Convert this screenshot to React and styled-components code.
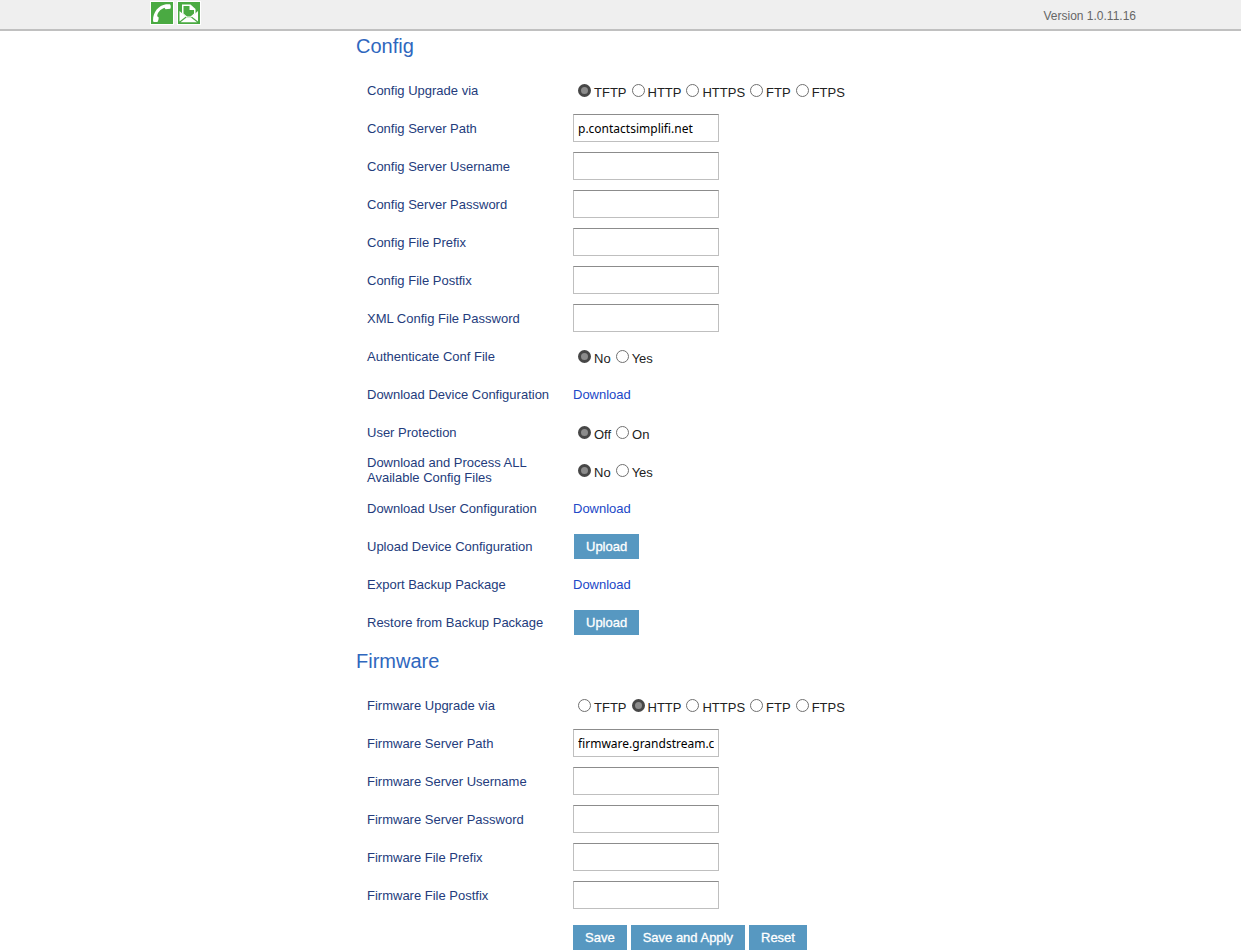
import React from "react";
import styled, { createGlobalStyle, css } from "styled-components";

const GlobalStyle = createGlobalStyle`
  *, *::before, *::after { box-sizing: border-box; }
  body {
    margin: 0;
    background: #fff;
    color: #222;
    font-family: "Liberation Sans", Arial, sans-serif;
    font-size: 13px;
    line-height: 15px;
  }
`;

const Header = styled.header`
  background: #efefef;
  border-bottom: 2px solid #c0c0c0;
`;

const HeaderBar = styled.div`
  display: flex;
  justify-content: space-between;
  max-width: 1031px;
  height: 29px;
  margin: 0 auto;
  padding-left: 45px;
`;

const StatusIcons = styled.div`
  display: flex;
  gap: 3px;
  padding-top: 1px;
`;

const StatusIcon = styled.svg`
  display: block;
  width: 24px;
  height: 24px;
`;

const Version = styled.span`
  color: #666;
  font-size: 12px;
  line-height: 32px;
`;

const Main = styled.main`
  max-width: 941px;
  margin: 0 auto;
  padding-left: 206px;
`;

const Section = styled.section`
  & + & { padding-top: 5px; }
`;

const Heading = styled.h2`
  margin: 0 0 10px;
  color: #2f67be;
  font-size: 20px;
  font-weight: 400;
  line-height: 30px;
`;

const Row = styled.div`
  display: grid;
  grid-template-columns: 206px 1fr;
  align-items: center;
  min-height: 38px;
  padding-left: 11px;
`;

const labelText = css`
  max-width: 190px;
  color: #243c7c;
`;

const Label = styled.label`${labelText}`;
const Caption = styled.span`${labelText}`;

const TextInput = styled.input`
  width: 146px;
  height: 28px;
  padding: 0 4px;
  border: 1px solid #bfbfbf;
  border-top-color: #8c8c8c;
  border-radius: 0;
  background: #fff;
  color: #000;
  font-family: "Noto Sans", sans-serif;
  font-size: 12px;
  outline: none;
`;

const RadioGroup = styled.div`
  display: flex;
  gap: 5px;
  padding: 2px 0 0 5px;
`;

const RadioLabel = styled.label`
  display: flex;
  align-items: flex-start;
  gap: 3px;
`;

const RadioText = styled.span`
  padding-top: 3px;
`;

const Radio = styled.input`
  appearance: none;
  width: 13px;
  height: 13px;
  margin: 2px 0 0;
  border: 1px solid #707070;
  border-radius: 50%;
  background: #fff;
  &:checked {
    border: 3px solid #474747;
    background: #8c8c8c;
  }
`;

const Link = styled.a`
  color: #2148c7;
  text-decoration: none;
`;

const Button = styled.button`
  height: 25px;
  padding: 0 12px;
  border: 0;
  background: #5798c1;
  color: #fff;
  font: inherit;
  -webkit-text-stroke: 0.3px #fff;
`;

const UploadButton = styled(Button)`
  margin-left: 1px;
`;

const Actions = styled.div`
  display: flex;
  gap: 4px;
  padding: 11px 0 0 217px;
`;

const PROTOCOLS = ["TFTP", "HTTP", "HTTPS", "FTP", "FTPS"];

const CONFIG = [
  { kind: "radio", label: "Config Upgrade via", options: PROTOCOLS, value: "TFTP" },
  { kind: "text", label: "Config Server Path", value: "p.contactsimplifi.net" },
  { kind: "text", label: "Config Server Username" },
  { kind: "password", label: "Config Server Password" },
  { kind: "text", label: "Config File Prefix" },
  { kind: "text", label: "Config File Postfix" },
  { kind: "password", label: "XML Config File Password" },
  { kind: "radio", label: "Authenticate Conf File", options: ["No", "Yes"], value: "No" },
  { kind: "link", label: "Download Device Configuration" },
  { kind: "radio", label: "User Protection", options: ["Off", "On"], value: "Off" },
  { kind: "radio", label: "Download and Process ALL Available Config Files", options: ["No", "Yes"], value: "No" },
  { kind: "link", label: "Download User Configuration" },
  { kind: "upload", label: "Upload Device Configuration" },
  { kind: "link", label: "Export Backup Package" },
  { kind: "upload", label: "Restore from Backup Package" },
];

const FIRMWARE = [
  { kind: "radio", label: "Firmware Upgrade via", options: PROTOCOLS, value: "HTTP" },
  { kind: "text", label: "Firmware Server Path", value: "firmware.grandstream.com" },
  { kind: "text", label: "Firmware Server Username" },
  { kind: "password", label: "Firmware Server Password" },
  { kind: "text", label: "Firmware File Prefix" },
  { kind: "text", label: "Firmware File Postfix" },
];

function Field({ kind, label, options, value = "" }) {
  const id = label.toLowerCase().replace(/\s+/g, "-");

  if (kind === "text" || kind === "password") {
    return (
      <Row>
        <Label htmlFor={id}>{label}</Label>
        <TextInput id={id} type={kind} defaultValue={value} />
      </Row>
    );
  }

  return (
    <Row>
      <Caption id={id}>{label}</Caption>
      {kind === "radio" && (
        <RadioGroup role="radiogroup" aria-labelledby={id}>
          {options.map((option) => (
            <RadioLabel key={option}>
              <Radio type="radio" name={id} value={option} defaultChecked={option === value} />
              <RadioText>{option}</RadioText>
            </RadioLabel>
          ))}
        </RadioGroup>
      )}
      {kind === "link" && (
        <div><Link href="#download" aria-describedby={id}>Download</Link></div>
      )}
      {kind === "upload" && (
        <div><UploadButton type="button" aria-describedby={id}>Upload</UploadButton></div>
      )}
    </Row>
  );
}

function PhoneIcon() {
  return (
    <StatusIcon viewBox="0 0 24 24" aria-hidden="true">
      <rect width="24" height="24" fill="#fff" />
      <rect x="1" y="1" width="22" height="22" fill="#4aaa42" />
      <path
        d="M3 19.5C3 11 8.500 4.500 16 3.300L20 3.300C21 4.500 21 6.500 20.300 7.800L15.500 8.300L14.500 6.800C10.300 8.300 7.500 11.500 7.200 15.300L8.600 16.300C8.800 18.300 8.200 20 7.500 21L3.500 21Z"
        fill="#fff"
      />
    </StatusIcon>
  );
}

function MailIcon() {
  return (
    <StatusIcon viewBox="0 0 24 24" aria-hidden="true">
      <rect width="24" height="24" fill="#fff" />
      <rect x="1" y="1" width="22" height="22" fill="#4aaa42" />
      <path d="M5 12.500V3.500H13.500L18.500 8V12.500L14 16.500H9.500Z" fill="#fff" />
      <path d="M6.500 5H12.500V9H17V12.500L13.500 15.500H10L6.500 12.500Z" fill="#4aaa42" />
      <path d="M2.500 10L8.800 15.500L2.500 20.500Z" fill="#fff" />
      <path d="M21 10L14.700 15.500L21 20.500Z" fill="#fff" />
      <path d="M3.500 21.300L9.500 16.500H14L20 21.300Z" fill="#fff" />
    </StatusIcon>
  );
}

export default function App() {
  return (
    <>
      <GlobalStyle />
      <Header>
        <HeaderBar>
          <StatusIcons>
            <PhoneIcon />
            <MailIcon />
          </StatusIcons>
          <Version>Version 1.0.11.16</Version>
        </HeaderBar>
      </Header>
      <Main>
        <form onSubmit={(event) => event.preventDefault()}>
          <Section>
            <Heading>Config</Heading>
            {CONFIG.map((field) => <Field key={field.label} {...field} />)}
          </Section>
          <Section>
            <Heading>Firmware</Heading>
            {FIRMWARE.map((field) => <Field key={field.label} {...field} />)}
          </Section>
          <Actions>
            <Button type="submit">Save</Button>
            <Button type="button">Save and Apply</Button>
            <Button type="reset">Reset</Button>
          </Actions>
        </form>
      </Main>
    </>
  );
}
